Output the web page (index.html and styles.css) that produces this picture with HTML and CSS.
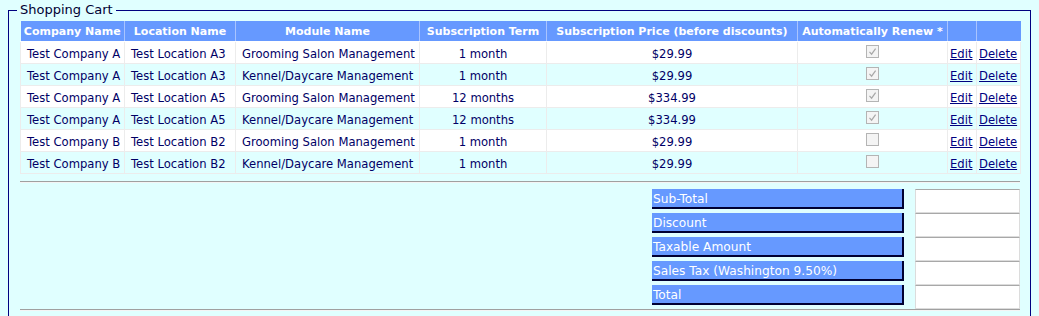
FILE: index.html
```html
<!DOCTYPE html>
<html lang="en">
<head>
<meta charset="utf-8">
<title>Shopping Cart</title>
<link rel="stylesheet" href="styles.css">
</head>
<body>
<fieldset class="cart">
  <legend class="cart-legend">Shopping Cart</legend>
  <table class="cart-table">
    <colgroup>
      <col class="c-company"><col class="c-location"><col class="c-module"><col class="c-term"><col class="c-price"><col class="c-renew"><col class="c-edit"><col class="c-delete">
    </colgroup>
    <thead>
      <tr>
        <th>Company Name</th><th>Location Name</th><th>Module Name</th><th>Subscription Term</th><th>Subscription Price (before discounts)</th><th>Automatically Renew *</th><th></th><th></th>
      </tr>
    </thead>
    <tbody>
      <tr class="odd"><td>Test Company A</td><td>Test Location A3</td><td>Grooming Salon Management</td><td class="ctr">1 month</td><td class="ctr">$29.99</td><td class="ctr"><span class="cb checked"><svg viewBox="0 0 13 13" width="13" height="13"><path d="M3.5 6.8 L5.6 9.2 L9.6 3.6" fill="none" stroke="#a8a8a8" stroke-width="1.2"/></svg></span></td><td class="act"><a href="#">Edit</a></td><td class="act"><a href="#">Delete</a></td></tr>
      <tr class="even"><td>Test Company A</td><td>Test Location A3</td><td>Kennel/Daycare Management</td><td class="ctr">1 month</td><td class="ctr">$29.99</td><td class="ctr"><span class="cb checked"><svg viewBox="0 0 13 13" width="13" height="13"><path d="M3.5 6.8 L5.6 9.2 L9.6 3.6" fill="none" stroke="#a8a8a8" stroke-width="1.2"/></svg></span></td><td class="act"><a href="#">Edit</a></td><td class="act"><a href="#">Delete</a></td></tr>
      <tr class="odd"><td>Test Company A</td><td>Test Location A5</td><td>Grooming Salon Management</td><td class="ctr">12 months</td><td class="ctr">$334.99</td><td class="ctr"><span class="cb checked"><svg viewBox="0 0 13 13" width="13" height="13"><path d="M3.5 6.8 L5.6 9.2 L9.6 3.6" fill="none" stroke="#a8a8a8" stroke-width="1.2"/></svg></span></td><td class="act"><a href="#">Edit</a></td><td class="act"><a href="#">Delete</a></td></tr>
      <tr class="even"><td>Test Company A</td><td>Test Location A5</td><td>Kennel/Daycare Management</td><td class="ctr">12 months</td><td class="ctr">$334.99</td><td class="ctr"><span class="cb checked"><svg viewBox="0 0 13 13" width="13" height="13"><path d="M3.5 6.8 L5.6 9.2 L9.6 3.6" fill="none" stroke="#a8a8a8" stroke-width="1.2"/></svg></span></td><td class="act"><a href="#">Edit</a></td><td class="act"><a href="#">Delete</a></td></tr>
      <tr class="odd"><td>Test Company B</td><td>Test Location B2</td><td>Grooming Salon Management</td><td class="ctr">1 month</td><td class="ctr">$29.99</td><td class="ctr"><span class="cb"></span></td><td class="act"><a href="#">Edit</a></td><td class="act"><a href="#">Delete</a></td></tr>
      <tr class="even"><td>Test Company B</td><td>Test Location B2</td><td>Kennel/Daycare Management</td><td class="ctr">1 month</td><td class="ctr">$29.99</td><td class="ctr"><span class="cb"></span></td><td class="act"><a href="#">Edit</a></td><td class="act"><a href="#">Delete</a></td></tr>
    </tbody>
  </table>
  <hr class="rule rule-top">
  <div class="summary">
    <div class="sum-label">Sub-Total</div><div class="sum-value"></div>
    <div class="sum-label">Discount</div><div class="sum-value"></div>
    <div class="sum-label">Taxable Amount</div><div class="sum-value"></div>
    <div class="sum-label">Sales Tax (Washington 9.50%)</div><div class="sum-value"></div>
    <div class="sum-label">Total</div><div class="sum-value"></div>
  </div>
  <hr class="rule rule-bottom">
</fieldset>
</body>
</html>
```

FILE: styles.css
```css
html, body {
  background: #e0ffff;
}
body {
  margin: 0;
  padding: 3px 8px 0 8px;
  font-family: "DejaVu Sans", Verdana, sans-serif;
  font-size: 11.6px;
  color: #000066;
}
.cart {
  margin: 0;
  border: 1px solid #000080;
  padding: 4px 10px 10px 11px;
  min-width: 0;
}
.cart-legend {
  padding: 0 3px;
  margin-left: -3px;
  font-size: 13px;
  line-height: 14px;
  color: #000033;
}
.cart-table {
  width: 1000px;
  table-layout: fixed;
  border-collapse: collapse;
}
.c-company { width: 104px; }
.c-location { width: 111px; }
.c-module { width: 184px; }
.c-term { width: 127px; }
.c-price { width: 251px; }
.c-renew { width: 150px; }
.c-edit { width: 29px; }
.c-delete { width: 44px; }
.cart-table th {
  background: #6699ff;
  color: #ffffff;
  font-weight: bold;
  font-size: 11px;
  height: 20px;
  padding: 0;
  text-align: center;
  white-space: nowrap;
  border-left: 1px solid #a9c4ff;
  border-bottom: 1px solid #ffffff;
}
.cart-table th:first-child { border-left: none; }
.cart-table td {
  height: 19px;
  padding: 2px 0 0 6px;
  white-space: nowrap;
  border: 1px solid #ececec;
  border-top: none;
}
.cart-table tr.odd td { background: #ffffff; }
.cart-table tr.even td { background: #e0ffff; }
.cart-table td.ctr { text-align: center; padding: 2px 0 0 0; }
.cart-table td.act { padding: 2px 0 0 2px; }
.cart-table a {
  color: #000080;
  text-decoration: underline;
}
.cb {
  display: inline-block;
  width: 11px;
  height: 11px;
  border: 1px solid #b4b4b4;
  background: #f4f4f4;
  vertical-align: middle;
  position: relative;
  top: -3px;
}
.cb svg { display: block; margin: -1px 0 0 -1px; }
.rule {
  border: none;
  border-top: 1px solid #a0a0a0;
  border-bottom: 1px solid #f4f4f4;
  margin: 7px 0 0 0;
  height: 0;
}
.summary {
  display: grid;
  grid-template-columns: 252px 105px;
  grid-auto-rows: 24px;
  column-gap: 11px;
  justify-content: end;
  margin-top: 6px;
}
.rule-bottom { margin-top: 0; }
.sum-label {
  height: 16px;
  padding: 2px 0 0 1px;
  background: #6699ff;
  color: #ffffff;
  font-size: 12.2px;
  line-height: 16px;
  border-right: 2px solid #000033;
  border-bottom: 2px solid #000033;
  box-sizing: content-box;
  width: 249px;
}
.sum-value {
  background: #ffffff;
  border: 1px solid #dcdcdc;
  border-top-color: #a8a8a8;
}
```
